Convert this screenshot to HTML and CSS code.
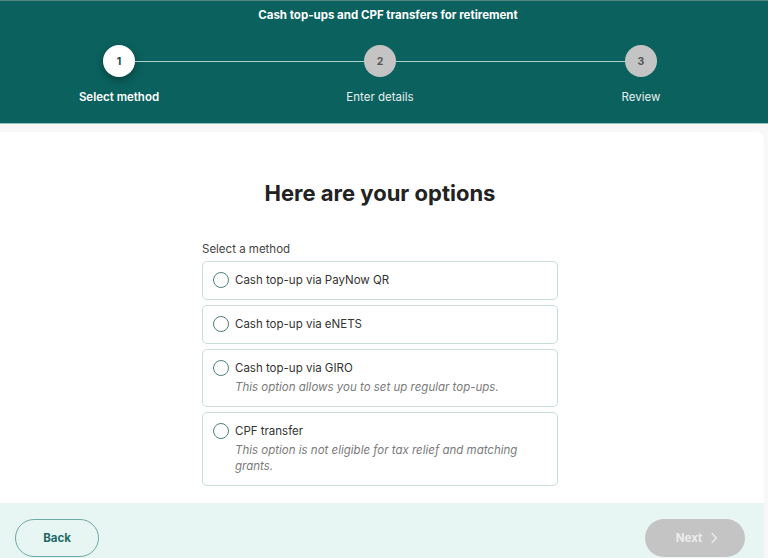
FILE: index.html
```html
<!DOCTYPE html>
<html lang="en">
<head>
<meta charset="utf-8">
<title>Cash top-ups and CPF transfers for retirement</title>
<link rel="stylesheet" href="styles.css">
</head>
<body>
<header class="topbar">
  <h1 class="title">Cash top-ups and CPF transfers for retirement</h1>
  <div class="steps">
    <span class="dot dot-active">1</span>
    <span class="track"></span>
    <span class="dot">2</span>
    <span class="track"></span>
    <span class="dot">3</span>
  </div>
  <div class="labels">
    <span class="label label-active">Select method</span>
    <span class="label">Enter details</span>
    <span class="label">Review</span>
  </div>
</header>
<main class="page">
  <section class="card">
    <h2 class="heading">Here are your options</h2>
    <div class="form">
      <p class="field-label">Select a method</p>
      <div class="options">
        <label class="option">
          <span class="radio"></span>
          <span class="option-body"><span class="option-title">Cash top-up via PayNow QR</span></span>
        </label>
        <label class="option">
          <span class="radio"></span>
          <span class="option-body"><span class="option-title">Cash top-up via eNETS</span></span>
        </label>
        <label class="option">
          <span class="radio"></span>
          <span class="option-body">
            <span class="option-title">Cash top-up via GIRO</span>
            <span class="option-note">This option allows you to set up regular top-ups.</span>
          </span>
        </label>
        <label class="option">
          <span class="radio"></span>
          <span class="option-body">
            <span class="option-title">CPF transfer</span>
            <span class="option-note">This option is not eligible for tax relief and matching grants.</span>
          </span>
        </label>
      </div>
    </div>
  </section>
  <footer class="actions">
    <button class="btn btn-back" type="button">Back</button>
    <button class="btn btn-next" type="button">Next <svg class="chev" width="8" height="12" viewBox="0 0 8 12"><polyline points="2,1.5 6.5,6 2,10.5" fill="none" stroke="currentColor" stroke-width="1.4" stroke-linecap="round" stroke-linejoin="round"/></svg></button>
  </footer>
</main>
</body>
</html>
```

FILE: styles.css
```css
* { box-sizing: border-box; }
html, body { margin: 0; padding: 0; }
body {
  width: 768px;
  height: 558px;
  overflow: hidden;
  background: #f2f2f2;
  font-family: "Inter", "Open Sans", sans-serif;
  color: #333;
}
.topbar {
  height: 124px;
  background: #0b615e;
  border-top: 1px solid #4f8785;
  border-bottom: 1px solid #8cc4c0;
  color: #fff;
}
.title {
  margin: 0;
  padding-top: 6px;
  text-align: center;
  font-size: 11.5px;
  line-height: 16px;
  font-weight: 700;
  padding-left: 8px;
}
.steps {
  display: flex;
  align-items: center;
  margin-top: 22px;
  padding-left: 103px;
  padding-right: 111px;
}
.dot {
  width: 32px;
  height: 32px;
  flex: none;
  border-radius: 50%;
  background: #c4c4c4;
  color: #555;
  font-size: 10.5px;
  font-weight: 700;
  display: flex;
  align-items: center;
  justify-content: center;
}
.dot-active {
  background: #fff;
  color: #1d4745;
  box-shadow: 0 3px 8px rgba(0, 0, 0, 0.35);
}
.track {
  flex: 1;
  height: 1px;
  background: #a9cfcc;
}
.labels {
  display: flex;
  gap: 101px;
  padding-left: 39px;
  margin-top: 12px;
}
.label {
  width: 160px;
  text-align: center;
  font-size: 11.5px;
  line-height: 16px;
  color: #e6efee;
}
.label-active { font-weight: 600; color: #fff; }

.page {
  background: #f8f8f8;
  padding-top: 8px;
}
.card {
  width: 764px;
  height: 371px;
  background: #fff;
  border-radius: 0 8px 0 0;
  padding-top: 47px;
}
.heading {
  margin: 0;
  width: 760px;
  text-align: center;
  font-size: 22px;
  line-height: 28px;
  font-weight: 700;
  color: #222;
}
.form {
  width: 356px;
  margin-left: 202px;
  margin-top: 34px;
}
.field-label {
  margin: 0 0 4px;
  font-size: 11.5px;
  line-height: 16px;
  color: #444;
}
.options {
  display: flex;
  flex-direction: column;
  gap: 5px;
}
.option {
  display: flex;
  align-items: flex-start;
  gap: 6px;
  padding: 10px 10px 11px;
  border: 1px solid #c9dedb;
  border-radius: 5px;
}
.radio {
  width: 16px;
  height: 16px;
  flex: none;
  border: 1.5px solid #50807d;
  border-radius: 50%;
}
.option-body { display: flex; flex-direction: column; }
.option-title {
  font-size: 11.5px;
  line-height: 16px;
  color: #333;
}
.option-note {
  margin-top: 3px;
  font-size: 11.5px;
  line-height: 16px;
  font-style: italic;
  color: #7a7a7a;
}
.actions {
  width: 764px;
  height: 55px;
  background: #e8f6f3;
  display: flex;
  justify-content: space-between;
  align-items: flex-start;
  padding: 16px 19px 0 15px;
}
.btn {
  height: 38px;
  border-radius: 19px;
  font-family: inherit;
  font-size: 11.5px;
  font-weight: 700;
  display: flex;
  align-items: center;
  justify-content: center;
  gap: 8px;
}
.btn-back {
  width: 84px;
  background: transparent;
  border: 1px solid #6ea9a5;
  color: #1f6a67;
}
.btn-next {
  width: 100px;
  background: #c4c4c4;
  border: none;
  color: #ececec;
  padding-left: 10px;
}
.chev { display: block; }
```
